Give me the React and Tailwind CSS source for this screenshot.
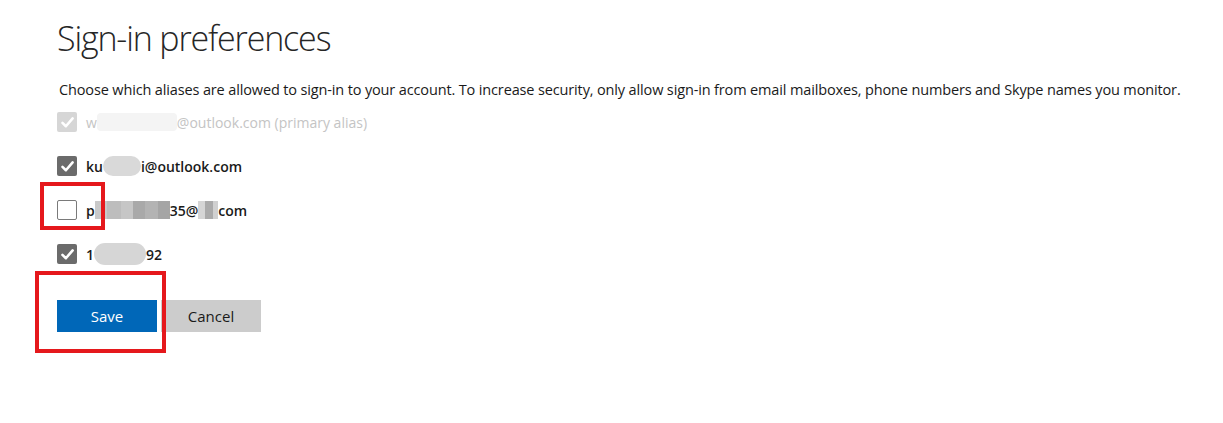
import React from "react";

function Check({ state }) {
  if (state === "off") {
    return <span className="block w-5 h-5 shrink-0 rounded-[2px] border border-[#7a7a7a] bg-white" />;
  }
  const bg = state === "disabled" ? "bg-[#d6d6d6]" : "bg-[#6b6b6b]";
  return (
    <span className={`flex w-5 h-5 shrink-0 items-center justify-center rounded-[2px] ${bg}`}>
      <svg width="15" height="15" viewBox="0 0 14 14">
        <path d="M2.3 7.4 L5.5 10.5 L11.8 3.2" fill="none" stroke="#fff" strokeWidth="2.4" strokeLinecap="round" strokeLinejoin="round" />
      </svg>
    </span>
  );
}

export default function App() {
  return (
    <div className="w-[1223px] h-[423px] bg-white text-[#1a1a1a] pl-[57px] pt-[15px]" style={{ fontFamily: '"Open Sans", "Noto Sans", sans-serif' }}>
      <h1 className="text-[34px] leading-[46px] font-light text-[#262626] tracking-[-1.15px]">Sign-in preferences</h1>
      <p className="mt-[19px] ml-[2px] text-[14.5px] leading-[20px] tracking-[-0.14px] text-[#1a1a1a]">
        Choose which aliases are allowed to sign-in to your account. To increase security, only allow sign-in from email mailboxes, phone numbers and Skype names you monitor.
      </p>

      <div className="mt-[12px] flex flex-col gap-[24px] text-[14px] font-semibold">
        <div className="flex items-center h-5 gap-[9px]">
          <Check state="disabled" />
          <span className="flex items-center text-[#c4c4c4] font-normal">
            <span>w</span>
            <span className="w-[80px] h-[18px] bg-[#f4f4f4] rounded-[4px]" />
            <span>@outlook.com (primary alias)</span>
          </span>
        </div>
        <div className="flex items-center h-5 gap-[9px]">
          <Check state="on" />
          <span className="flex items-center">
            <span>ku</span>
            <span className="w-[38px] h-[20px] rounded-full bg-[#d9d9d9]" />
            <span>i@outlook.com</span>
          </span>
        </div>
        <div className="relative flex items-center h-5 gap-[9px]">
          <span className="absolute left-[-17px] top-[-18px] w-[65px] h-[48px] border-[4px] border-[#e5181c]" />
          <Check state="off" />
          <span className="flex items-center">
            <span>p</span>
            <span className="flex h-[18px]">
              <span className="w-[12px] bg-[#c9c9c9]" />
              <span className="w-[14px] bg-[#bdbdbd]" />
              <span className="w-[12px] bg-[#c6c6c6]" />
              <span className="w-[12px] bg-[#a9a9a9]" />
              <span className="w-[13px] bg-[#b3b3b3]" />
              <span className="w-[12px] bg-[#a5a5a5]" />
            </span>
            <span>35@</span>
            <span className="flex h-[18px]">
              <span className="w-[7px] bg-[#d5d5d5]" />
              <span className="w-[8px] bg-[#aaaaaa]" />
              <span className="w-[5px] bg-[#d0d0d0]" />
            </span>
            <span>com</span>
          </span>
        </div>
        <div className="flex items-center h-5 gap-[9px]">
          <Check state="on" />
          <span className="flex items-center">
            <span>1</span>
            <span className="w-[52px] h-[22px] rounded-full bg-[#d6d6d6]" />
            <span>92</span>
          </span>
        </div>
      </div>

      <div className="relative mt-[36px] flex gap-[4px]">
        <span className="absolute left-[-22px] top-[-29px] w-[131px] h-[82px] border-[4px] border-[#e5181c]" />
        <button className="relative w-[100px] h-[32px] bg-[#0067b8] text-white text-[15px]">Save</button>
        <button className="w-[100px] h-[32px] bg-[#cccccc] text-[#1a1a1a] text-[15px]">Cancel</button>
      </div>
    </div>
  );
}
